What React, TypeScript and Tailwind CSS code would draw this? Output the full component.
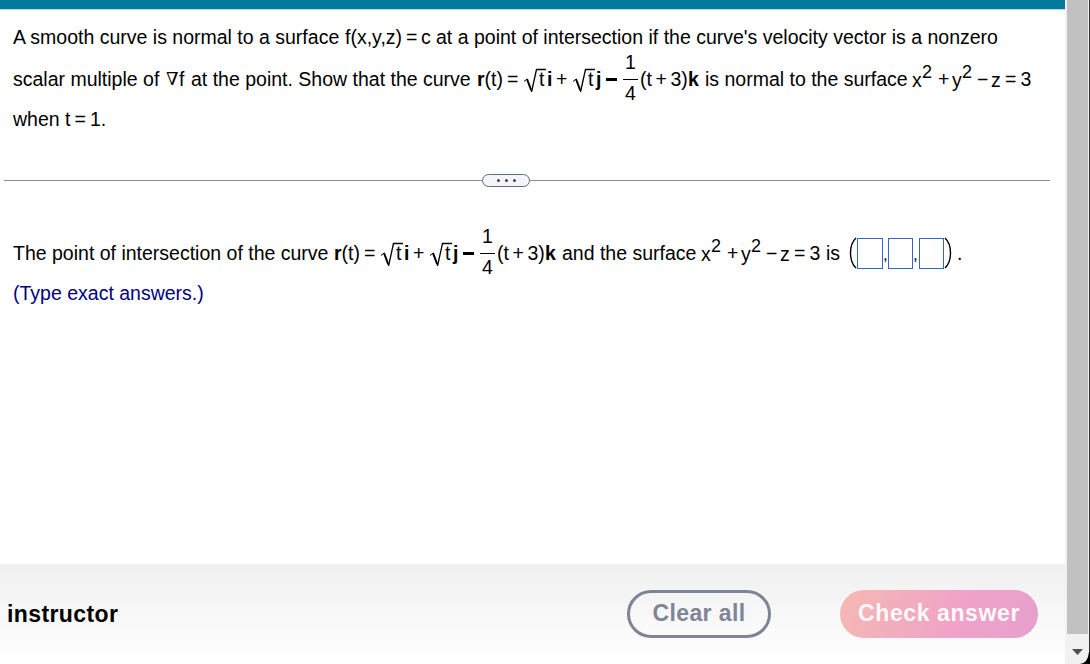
import { type ReactNode } from "react";

function Root() {
  return (
    <span className="relative inline-block w-[24px] pl-[15px]">
      t
      <svg
        className="absolute -left-px top-[1px]"
        width="24"
        height="26"
        viewBox="0 0 24 26"
        fill="none"
        stroke="black"
      >
        <path d="M1 13.5 L4.2 11" strokeWidth="1" />
        <path d="M4 11 L8.3 22.5" strokeWidth="2" />
        <path d="M8.5 24 L13.5 1.5 H23" strokeWidth="1.3" />
      </svg>
    </span>
  );
}

function Quarter() {
  return (
    <span className="-ml-[2px] inline-flex w-[17px] flex-col items-center">
      <span className="flex h-[30px] w-[15px] flex-col items-center justify-end border-b border-black leading-[22px]">
        <span className="h-[28px]">1</span>
      </span>
      <span className="h-[22px] leading-[26px]">4</span>
    </span>
  );
}

function Curve() {
  return (
    <>
      <b className="w-[7.5px]">r</b>
      <span className="w-[22.5px]">(t)</span>
      <span className="w-[17px]">=</span>
      <Root />
      <b className="-ml-px w-[9px]">i</b>
      <span className="w-[17px]">+</span>
      <Root />
      <b className="-ml-px w-[11px]">j</b>
      <div className="flex h-6 w-[17px] items-center">
        <span className="-ml-px h-[3px] w-[11px] bg-black" />
      </div>
      <div className="h-[24px] w-[16px]">
        <div className="-mt-[17px]">
          <Quarter />
        </div>
      </div>
      <span className="w-[15.5px]">(t</span>
      <span className="w-[15px]">+</span>
      <span className="w-[17.5px]">3)</span>
      <b className="w-[17px]">k</b>
    </>
  );
}

function Surface() {
  return (
    <>
      <span className="w-[10px] translate-y-px">x</span>
      <span className="w-[16px] -translate-y-[7px] text-[18px]">2</span>
      <span className="w-[14px]">+</span>
      <span className="w-[10px] translate-y-px">y</span>
      <span className="w-[15px] -translate-y-[7px] text-[18px]">2</span>
      <span className="w-[14px]">−</span>
      <span className="w-[14px] translate-y-px">z</span>
      <span className="w-[15.5px]">=</span>
      <span className="w-[16.5px]">3</span>
    </>
  );
}

function Line({ children, className = "" }: { children: ReactNode; className?: string }) {
  return (
    <div className={`flex h-6 items-start whitespace-nowrap pl-[13px] leading-6 *:shrink-0 ${className}`}>
      {children}
    </div>
  );
}

function AnswerPoint() {
  return (
    <div className="-mt-[5px] flex h-[34px] items-center">
      <svg width="8" height="32" viewBox="0 0 8 32" fill="none" stroke="black" strokeWidth="1.4">
        <path d="M7 1 Q1.5 6 1.5 16 T7 31" />
      </svg>
      <input aria-label="x" className="h-[31px] w-[26px] border border-[#2f68cc]" />
      <span className="w-[5px] pt-[4px] text-[17px]">,</span>
      <input aria-label="y" className="h-[31px] w-[25px] border border-[#2f68cc]" />
      <span className="w-[6px] pt-[4px] text-[17px]">,</span>
      <input aria-label="z" className="h-[31px] w-[25px] border border-[#2f68cc]" />
      <svg width="8" height="32" viewBox="0 0 8 32" fill="none" stroke="black" strokeWidth="1.4">
        <path d="M1 1 Q6.5 6 6.5 16 T1 31" />
      </svg>
      <span className="pl-[5px]">.</span>
    </div>
  );
}

export default function App() {
  return (
    <div className="flex h-[664px] w-[1090px] overflow-hidden bg-white font-['Liberation_Sans',Arial,sans-serif] text-[19.5px] text-black">
      <div className="flex w-[1065px] flex-col">
        <div className="h-[10px] shrink-0 border-b border-[#c3d5e6] bg-[#007a9c]" />
        <main className="h-[554px] shrink-0 pt-[15px]">
          <Line>
            <span className="w-[332px]">A smooth curve is normal to a surface</span>
            <span className="w-[61px]">f(x,y,z)</span>
            <span className="w-[15px]">=</span>
            <span className="w-[15px]">c</span>
            <span>at a point of intersection if the curve's velocity vector is a nonzero</span>
          </Line>
          <Line className="mt-[18px]">
            <span className="w-[153px]">scalar multiple of</span>
            <span className="w-[13px] font-['DejaVu_Serif',serif] text-[18px]">∇</span>
            <span className="w-[12px]">f</span>
            <span className="w-[286px]">at the point. Show that the curve</span>
            <Curve />
            <span className="w-[207px]">is normal to the surface</span>
            <Surface />
          </Line>
          <Line className="mt-[16px]">
            <span className="w-[61.5px]">when t</span>
            <span className="w-[15.5px]">=</span>
            <span>1.</span>
          </Line>
          <div className="ml-1 mt-[43px] flex w-[1046px] items-center">
            <div className="h-px w-[478px] bg-[#858fa5]" />
            <button className="flex h-[13px] w-[48px] items-center justify-center gap-[5px] rounded-full border border-[#5f6c80] bg-[#f3f5fa]">
              <i className="size-[3px] rounded-full bg-[#444]" />
              <i className="size-[3px] rounded-full bg-[#444]" />
              <i className="size-[3px] rounded-full bg-[#444]" />
            </button>
            <div className="h-px flex-1 bg-[#858fa5]" />
          </div>
          <Line className="mt-[54px]">
            <span className="w-[321px]">The point of intersection of the curve</span>
            <Curve />
            <span className="w-[139px]">and the surface</span>
            <Surface />
            <span className="w-[23px]">is</span>
            <AnswerPoint />
          </Line>
          <Line className="mt-[16px] text-[#000080]">(Type exact answers.)</Line>
        </main>
        <footer className="flex h-[100px] items-center bg-linear-to-b from-[#f0f0f0] to-white pl-[7px] font-bold">
          <span className="w-[620px] text-[23px] tracking-[0.4px]">instructor</span>
          <button className="h-12 w-[144px] rounded-full border-[3px] border-[#7d8596] pb-[2px] text-[23px] tracking-[0.4px] text-[#7d8596]">
            Clear all
          </button>
          <button className="ml-[69px] h-12 w-[198px] rounded-full bg-linear-[110deg,#f5b9b2,#f0a2c8_60%,#e5a0cd] pb-[2px] text-[23px] tracking-[0.6px] text-[#fafafa]">
            Check answer
          </button>
        </footer>
      </div>
      <div className="relative flex w-[25px] flex-col border-r border-[#333] bg-[#f1f1f1] pl-[2px]">
        <div className="h-[634px] w-[21px] bg-[#c1c1c1]" />
        <svg className="ml-[5px] mt-[15px]" width="11" height="6" viewBox="0 0 11 6">
          <path d="M0 0h11L5.5 6z" fill="#505050" />
        </svg>
        <svg className="absolute -right-px bottom-0" width="10" height="12" viewBox="0 0 10 12">
          <path d="M9 0h1v12H0Q8 11 9 0" fill="#000" />
        </svg>
      </div>
    </div>
  );
}
